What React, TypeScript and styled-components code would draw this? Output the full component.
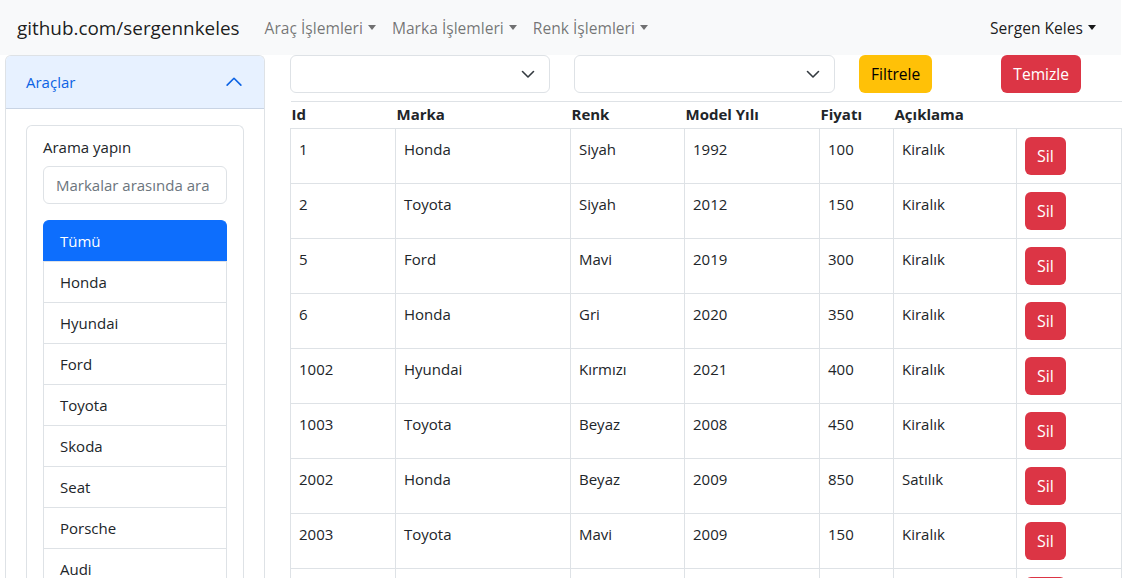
import React from "react";
import styled, { createGlobalStyle } from "styled-components";

const Global = createGlobalStyle`
  html, body { margin: 0; padding: 0; overflow: hidden; background: #fff; }
  body {
    font-family: "Open Sans", "Noto Sans", "Liberation Sans", sans-serif;
    font-size: 16px;
    line-height: 24px;
    color: #212529;
  }
  * { box-sizing: border-box; }
`;

const Shell = styled.div`
  width: 1121px;
`;

const Navbar = styled.nav`
  display: flex;
  align-items: center;
  height: 55px;
  background: #f8f9fa;
  padding: 0 25px 0 17px;
`;

const Brand = styled.a`
  font-size: 18.9px;
  line-height: 30px;
  color: rgba(0, 0, 0, 0.9);
  margin-right: 17px;
  text-decoration: none;
`;

const NavLink = styled.a<{ $strong?: boolean }>`
  display: inline-flex;
  align-items: center;
  padding: 8px;
  font-size: 15.6px;
  color: ${(p) => (p.$strong ? "rgba(0,0,0,0.9)" : "rgba(0,0,0,0.55)")};
  text-decoration: none;
  ${(p) => (p.$strong ? "margin-left: auto; padding-right: 0;" : "")}
  &::after {
    content: "";
    display: inline-block;
    margin-left: 5px;
    border-top: 5px solid;
    border-left: 4.5px solid transparent;
    border-right: 4.5px solid transparent;
  }
`;

const Layout = styled.div`
  display: flex;
  align-items: flex-start;
  padding-left: 5px;
  gap: 25px;
`;

const Accordion = styled.aside`
  width: 260px;
  flex: none;
  border: 1px solid #dee2e6;
  border-bottom: none;
  border-radius: 6px 6px 0 0;
  height: 530px;
`;

const AccHeader = styled.button`
  display: flex;
  align-items: center;
  justify-content: space-between;
  width: 100%;
  height: 53px;
  padding: 0 20px;
  border: none;
  border-bottom: 1px solid #c9d4e4;
  border-radius: 5px 5px 0 0;
  background: #e7f1ff;
  color: #0c63e4;
  font: inherit;
  font-size: 15px;
`;

const AccBody = styled.div`
  padding: 16px 20px 0;
`;

const Card = styled.div`
  border: 1px solid #dee2e6;
  border-bottom: none;
  border-radius: 6px 6px 0 0;
  padding: 9px 16px 0;
  height: 460px;
`;

const Label = styled.div`
  font-size: 15px;
  margin-bottom: 7px;
`;

const SearchInput = styled.input`
  display: block;
  width: 100%;
  height: 38px;
  padding: 6px 12px;
  border: 1px solid #dee2e6;
  border-radius: 6px;
  font: inherit;
  font-size: 15px;
  color: #212529;
  &::placeholder { color: #6c757d; }
`;

const ListGroup = styled.ul`
  list-style: none;
  margin: 16px 0 0;
  padding: 0;
`;

const ListItem = styled.li<{ $active?: boolean }>`
  height: 41px;
  padding: 8px 16px;
  font-size: 15px;
  border: 1px solid ${(p) => (p.$active ? "#0d6efd" : "#dee2e6")};
  border-bottom: none;
  background: ${(p) => (p.$active ? "#0d6efd" : "#fff")};
  color: ${(p) => (p.$active ? "#fff" : "#212529")};
  &:first-child { border-radius: 6px 6px 0 0; }
`;

const Main = styled.main`
  flex: 1;
  min-width: 0;
`;

const FilterRow = styled.div`
  display: flex;
  align-items: center;
  height: 38px;
`;

const SelectBox = styled.div<{ $w: number; $ml?: number }>`
  width: ${(p) => p.$w}px;
  margin-left: ${(p) => p.$ml ?? 0}px;
  height: 38px;
  border: 1px solid #dee2e6;
  border-radius: 6px;
  display: flex;
  align-items: center;
  justify-content: flex-end;
  padding-right: 13px;
  color: #343a40;
`;

const Btn = styled.button<{ $variant: "warning" | "danger"; $ml?: number }>`
  height: 38px;
  margin-left: ${(p) => p.$ml ?? 0}px;
  padding: 6px 12px;
  border: none;
  border-radius: 6px;
  font: inherit;
  font-size: 15.6px;
  background: ${(p) => (p.$variant === "warning" ? "#ffc107" : "#dc3545")};
  color: ${(p) => (p.$variant === "warning" ? "#000" : "#fff")};
`;

const Table = styled.table`
  margin-top: 8px;
  width: 831px;
  border-collapse: collapse;
  table-layout: fixed;
`;

const Th = styled.th`
  text-align: left;
  font-weight: 700;
  font-size: 15px;
  padding: 0 1px 1px;
  height: 27px;
  border-top: 1px solid #dee2e6;
  border-bottom: 1px solid #dee2e6;
  vertical-align: top;
`;

const Td = styled.td`
  border: 1px solid #dee2e6;
  padding: 8px;
  height: 55px;
  vertical-align: top;
  font-size: 15px;
`;

const SilBtn = styled(Btn)`
  font-size: 16px;
`;

const Chevron = ({ size, color, up }: { size: number; color: string; up?: boolean }) => (
  <svg width={size} height={size} viewBox="0 0 16 16" fill="none" style={{ transform: up ? "rotate(180deg)" : undefined }}>
    <path d="M2.5 5.5 8 11l5.5-5.5" stroke={color} strokeWidth={up ? 1.3 : 1.6} strokeLinecap="round" strokeLinejoin="round" />
  </svg>
);

const brands = ["Tümü", "Honda", "Hyundai", "Ford", "Toyota", "Skoda", "Seat", "Porsche", "Audi", "BMW"];

const rows = [
  ["1", "Honda", "Siyah", "1992", "100", "Kiralık"],
  ["2", "Toyota", "Siyah", "2012", "150", "Kiralık"],
  ["5", "Ford", "Mavi", "2019", "300", "Kiralık"],
  ["6", "Honda", "Gri", "2020", "350", "Kiralık"],
  ["1002", "Hyundai", "Kırmızı", "2021", "400", "Kiralık"],
  ["1003", "Toyota", "Beyaz", "2008", "450", "Kiralık"],
  ["2002", "Honda", "Beyaz", "2009", "850", "Satılık"],
  ["2003", "Toyota", "Mavi", "2009", "150", "Kiralık"],
  ["2004", "Seat", "Gri", "2015", "200", "Kiralık"],
];

const widths = [105, 175, 114, 135, 74, 123, 105];
const heads = ["Id", "Marka", "Renk", "Model Yılı", "Fiyatı", "Açıklama", ""];

export default function App() {
  return (
    <Shell>
      <Global />
      <Navbar>
        <Brand>github.com/sergennkeles</Brand>
        <NavLink>Araç İşlemleri</NavLink>
        <NavLink>Marka İşlemleri</NavLink>
        <NavLink>Renk İşlemleri</NavLink>
        <NavLink $strong>Sergen Keles</NavLink>
      </Navbar>
      <Layout>
        <Accordion>
          <AccHeader>
            <span>Araçlar</span>
            <Chevron size={20} color="#0c63e4" up />
          </AccHeader>
          <AccBody>
            <Card>
              <Label>Arama yapın</Label>
              <SearchInput placeholder="Markalar arasında ara" />
              <ListGroup>
                {brands.map((b, i) => (
                  <ListItem key={b} $active={i === 0}>{b}</ListItem>
                ))}
              </ListGroup>
            </Card>
          </AccBody>
        </Accordion>
        <Main>
          <FilterRow>
            <SelectBox $w={260}><Chevron size={16} color="#343a40" /></SelectBox>
            <SelectBox $w={261} $ml={24}><Chevron size={16} color="#343a40" /></SelectBox>
            <Btn $variant="warning" $ml={24}>Filtrele</Btn>
            <Btn $variant="danger" $ml={69}>Temizle</Btn>
          </FilterRow>
          <Table>
            <colgroup>
              {widths.map((w, i) => <col key={i} style={{ width: w }} />)}
            </colgroup>
            <thead>
              <tr>{heads.map((h, i) => <Th key={i}>{h}</Th>)}</tr>
            </thead>
            <tbody>
              {rows.map((r) => (
                <tr key={r[0]}>
                  {r.map((c, i) => <Td key={i}>{c}</Td>)}
                  <Td><SilBtn $variant="danger">Sil</SilBtn></Td>
                </tr>
              ))}
            </tbody>
          </Table>
        </Main>
      </Layout>
    </Shell>
  );
}
